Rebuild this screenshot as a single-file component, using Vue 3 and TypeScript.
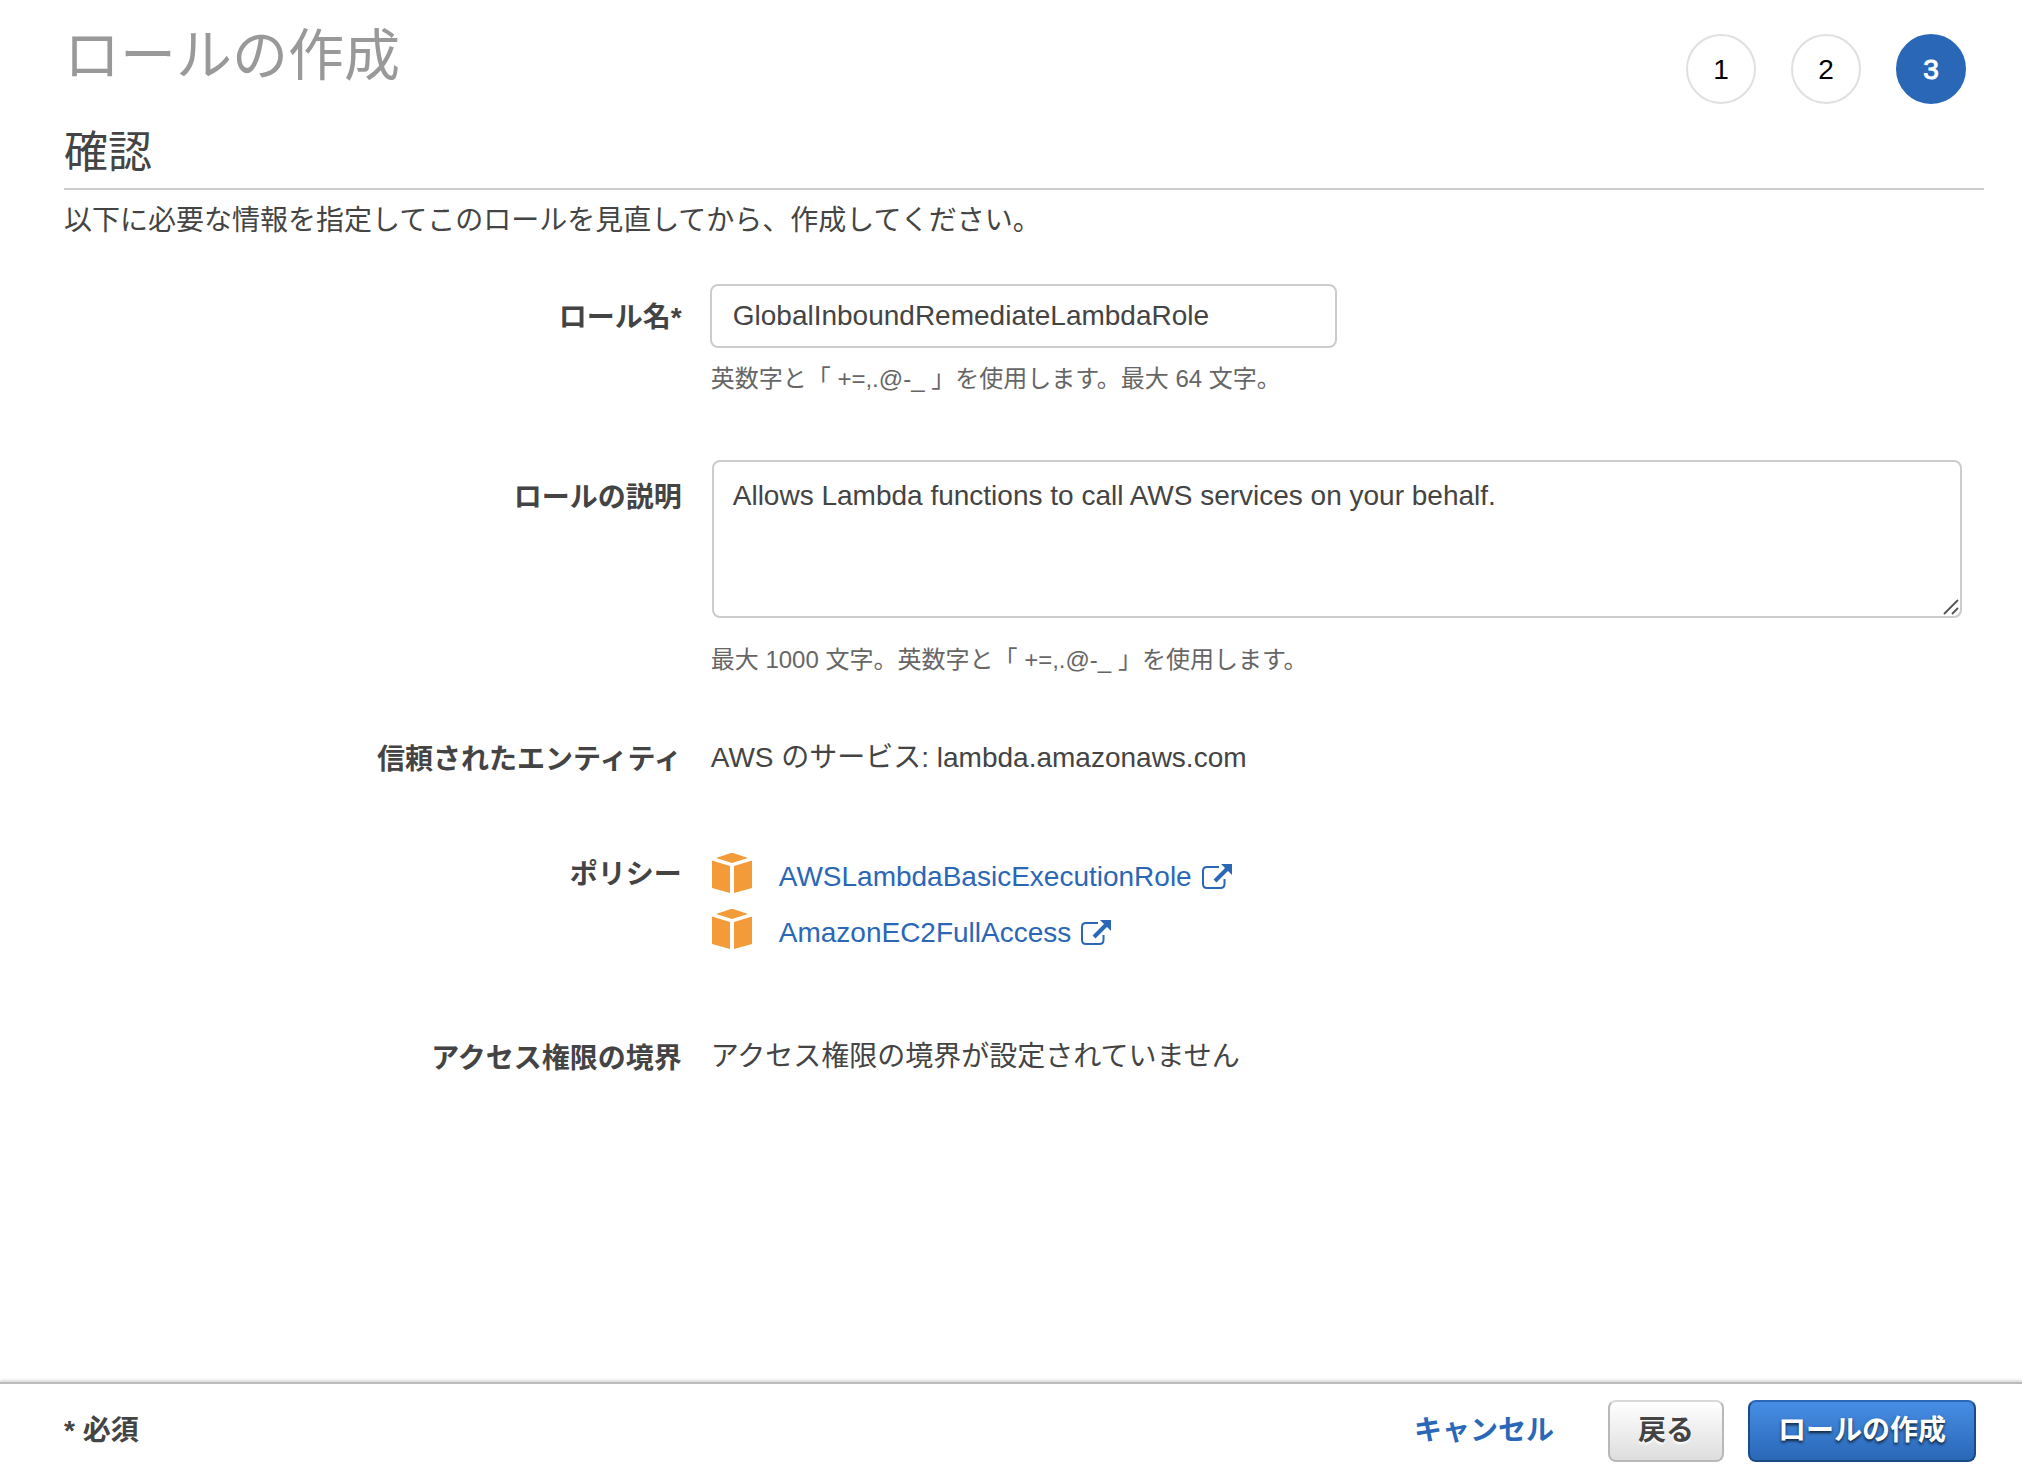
<script setup lang="ts">
import { ref } from 'vue'

const steps: number[] = [1, 2, 3]
const currentStep = ref<number>(3)

const roleName = ref<string>('GlobalInboundRemediateLambdaRole')
const description = ref<string>('Allows Lambda functions to call AWS services on your behalf.')
const policies: string[] = ['AWSLambdaBasicExecutionRole', 'AmazonEC2FullAccess']
</script>

<template>
  <div class="page" lang="ja">
    <header class="header">
      <h1 class="title">ロールの作成</h1>
      <ol class="steps">
        <li v-for="step in steps" :key="step" class="step" :class="{ active: step === currentStep }">{{ step }}</li>
      </ol>
    </header>

    <main class="main">
      <h2 class="subtitle">確認</h2>
      <p class="intro">以下に必要な情報を指定してこのロールを見直してから、作成してください。</p>

      <form id="role-form" class="form" @submit.prevent>
        <div class="row row-name">
          <label class="label label-field" for="role-name">ロール名*</label>
          <div class="value">
            <input id="role-name" v-model="roleName" class="input" type="text" />
            <p class="hint">英数字と「 +=,.@-_ 」を使用します。最大 64 文字。</p>
          </div>
        </div>

        <div class="row row-description">
          <label class="label label-area" for="role-description">ロールの説明</label>
          <div class="value">
            <div class="area-wrap">
              <textarea id="role-description" v-model="description" class="textarea"></textarea>
              <svg class="grip" width="16" height="16" viewBox="0 0 16 16" aria-hidden="true">
                <path d="M1 15L15 1M9 15L15 9" fill="none" stroke="#555" stroke-width="1.8" />
              </svg>
            </div>
            <p class="hint hint-area">最大 1000 文字。英数字と「 +=,.@-_ 」を使用します。</p>
          </div>
        </div>

        <div class="row row-entity">
          <span class="label">信頼されたエンティティ</span>
          <div class="value text">AWS のサービス: lambda.amazonaws.com</div>
        </div>

        <div class="row row-policy">
          <span class="label">ポリシー</span>
          <ul class="value policies">
            <li v-for="policy in policies" :key="policy" class="policy">
              <svg class="cube" width="40" height="40" viewBox="0 0 40 40" aria-hidden="true">
                <g fill="#f29b38">
                  <path d="M4 5L16 1Q20 -1 24 1L36 5L20 10Z" />
                  <path d="M0 7.500L18 13V40L0 35Z" />
                  <path d="M40 7.500L22 13V40L40 35Z" />
                </g>
              </svg>
              <a class="link" href="#">
                {{ policy }}
                <svg class="external" width="30" height="26" viewBox="0 0 30 26" aria-hidden="true">
                  <path d="M17 3H5Q1 3 1 7V20Q1 24 5 24H18.500Q22.500 24 22.500 20V15" fill="none" stroke="currentColor" stroke-width="2" />
                  <path d="M13 17L25 5" fill="none" stroke="currentColor" stroke-width="4" />
                  <path d="M19 0H30V11Z" fill="currentColor" />
                </svg>
              </a>
            </li>
          </ul>
        </div>

        <div class="row row-boundary">
          <span class="label">アクセス権限の境界</span>
          <div class="value text">アクセス権限の境界が設定されていません</div>
        </div>
      </form>
    </main>

    <footer class="footer">
      <span class="required">* 必須</span>
      <div class="actions">
        <a class="cancel" href="#">キャンセル</a>
        <button class="button" type="button">戻る</button>
        <button class="button primary" type="submit" form="role-form">ロールの作成</button>
      </div>
    </footer>
  </div>
</template>

<style>
body {
  margin: 0;
  background: #fff;
}
</style>

<style scoped>
.page {
  display: flex;
  flex-direction: column;
  min-height: 100vh;
  box-sizing: border-box;
  font-family: "Liberation Sans", "Noto Sans CJK JP", sans-serif;
  font-size: 28px;
  line-height: 40px;
  color: #444;
}

.page *,
.page *::before {
  box-sizing: border-box;
}

h1,
h2,
p,
ol,
ul {
  margin: 0;
  padding: 0;
  font-weight: 400;
  list-style: none;
}

.header {
  display: flex;
  justify-content: space-between;
  align-items: flex-start;
  padding: 24px 56px 0 64px;
}

.title {
  font-size: 56px;
  line-height: 64px;
  color: #999;
}

.steps {
  display: flex;
  gap: 35px;
  padding-top: 10px;
}

.step {
  display: flex;
  align-items: center;
  justify-content: center;
  width: 70px;
  height: 70px;
  padding-top: 2px;
  border: 2px solid #e0e0e0;
  border-radius: 50%;
  color: #000;
}

.step.active {
  border-color: #2a67b7;
  background: #2a67b7;
  color: #fff;
  -webkit-text-stroke: 1px #fff;
}

.main {
  flex: 1;
  padding: 21px 38px 40px 64px;
}

.subtitle {
  padding-bottom: 7px;
  border-bottom: 2px solid #ccc;
  font-size: 44px;
  line-height: 56px;
}

.intro {
  padding-top: 11px;
}

.form {
  padding: 43px 20px 0 0;
}

.row {
  display: grid;
  grid-template-columns: 33fr 67fr;
  column-gap: 28px;
}

.row-description {
  margin-top: 63px;
}

.row-entity,
.row-policy,
.row-boundary {
  margin-top: 60px;
}

.row-policy {
  margin-top: 73px;
}

.row-boundary {
  margin-top: 88px;
}

.label {
  padding-top: 2px;
  font-weight: 700;
  text-align: right;
}

.label-field {
  line-height: 64px;
}

.label-area {
  line-height: 72px;
}

.value {
  min-width: 0;
}

.input,
.textarea {
  display: block;
  border: 2px solid #ccc;
  border-radius: 8px;
  outline: none;
  background: #fff;
  color: #444;
  font: inherit;
}

.input {
  width: 50%;
  height: 64px;
  padding: 0 21px;
}

.area-wrap {
  position: relative;
  margin: 0 2px;
}

.textarea {
  width: 100%;
  height: 158px;
  padding: 14px 19px;
  resize: none;
}

.grip {
  position: absolute;
  right: 3px;
  bottom: 3px;
}

.hint {
  margin-top: 13px;
  padding-left: 1px;
  font-size: 24px;
  line-height: 36px;
  color: #666;
}

.hint-area {
  margin-top: 24px;
}

.text {
  padding-left: 1px;
}

.policies {
  display: flex;
  flex-direction: column;
  gap: 16px;
  padding-left: 2px;
}

.policy {
  display: flex;
  gap: 27px;
  height: 40px;
}

.link,
.cancel {
  color: #2a67b7;
  text-decoration: none;
}

.link {
  display: flex;
  align-items: center;
  gap: 10px;
  height: 48px;
}

.footer {
  display: flex;
  justify-content: space-between;
  align-items: center;
  height: 90px;
  padding: 6px 46px 0 64px;
  border-top: 2px solid #bbb;
  box-shadow: 0 -2px 2px #ddd;
  font-weight: 700;
}

.actions {
  display: flex;
  align-items: center;
}

.cancel {
  margin-right: 54px;
}

.button {
  height: 62px;
  padding: 0 28px;
  border: 2px solid #b8b8b8;
  border-top-color: #d8d8d8;
  border-radius: 8px;
  background: linear-gradient(#fff, #ddd);
  color: #444;
  font: inherit;
  text-shadow: 0 2px 2px #fff;
  cursor: pointer;
}

.primary {
  margin-left: 24px;
  border-color: #1c4a86;
  border-top-color: #2a67b7;
  background: linear-gradient(#468ee5, #2a67b7);
  color: #fff;
  text-shadow: 0 2px 3px #123;
}
</style>
